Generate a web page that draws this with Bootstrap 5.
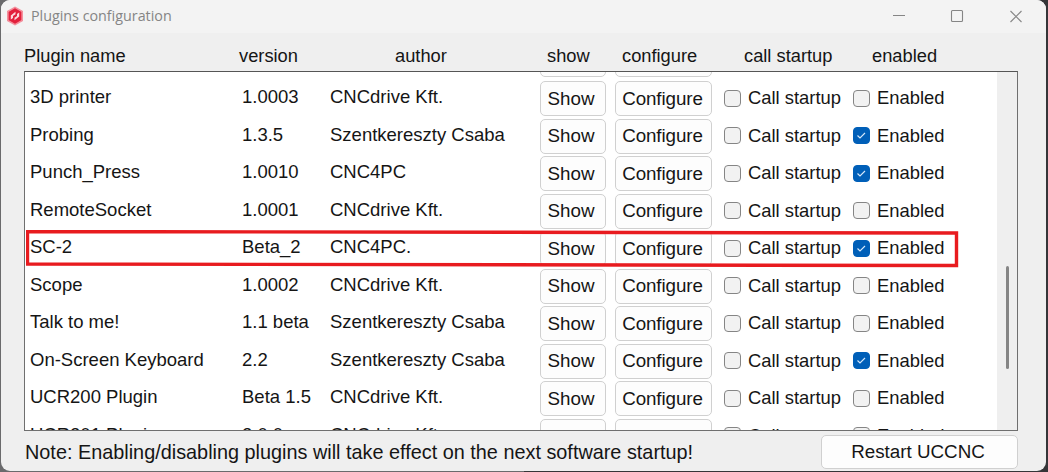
<!DOCTYPE html>
<html lang="en">
<head>
<meta charset="utf-8">
<title>Plugins configuration</title>
<link href="https://cdn.jsdelivr.net/npm/bootstrap@5.3.0/dist/css/bootstrap.min.css" rel="stylesheet">
<style>
body{width:1048px;height:472px;overflow:hidden;background:linear-gradient(90deg,#6a6a6c 0,#6a6a6c 50%,#353538 50%);font-family:"Liberation Sans",Arial,sans-serif;font-size:18.5px;line-height:24px;color:#151515;white-space:nowrap}
.win{width:1045px;height:471px;margin-left:1px;background:#efefef;border-radius:9px;overflow:hidden}
.titlebar{height:33px;background:#f3f3f3;padding:0 0 2px 5px;font:14.3px/31px "Open Sans","Noto Sans",sans-serif;color:#858585}
.titlebar .name{margin-left:7px;width:862px}
.heads{display:grid;grid-template-columns:215px 156px 152px 75px 122px 128px auto;height:38px;padding:11px 0 0 23px;font-size:18.3px}
.plist{position:relative;width:994px;height:360px;margin-left:23px;background:#fff;border:1px solid #6f6f6f;border-top-color:#555;overflow:hidden}
.rows{padding-top:9px}
.prow{display:grid;grid-template-columns:212px 88px 210px 75px 109px 129px auto;height:37.5px;padding-left:5px}
.prow>span{padding-top:4px}
.peek{height:5px;margin-top:-9px;margin-bottom:4px;overflow:hidden}
.peek i{display:block;height:35px;margin-top:-30px;grid-row:1}
.peek .b1{grid-column:4}
.peek .b2{grid-column:5}
.wbtn{height:35px;padding:1px 0 1px;border:1.5px solid #d0d0d0;border-radius:5px;background:#fdfdfd;color:#151515;font-size:18.8px;line-height:30px;text-align:center}
.b1{width:66px;padding-right:4px}.b2{width:97px;padding-right:2px;letter-spacing:-.1px}
.chk{display:flex;align-items:center;height:24px;margin-top:5px;gap:7px;font-size:18.4px}
.box{flex:none;width:17px;height:17px;border:1.4px solid #858585;border-radius:4px;background:#f2f2f2;display:flex}
.box.on{background:#005fb8;border-color:#005fb8}
.track{position:absolute;right:0;top:0;width:20px;height:358px;background:#efefef}
.thumb{position:absolute;right:8px;top:194px;width:3px;height:103px;border-radius:2px;background:#858585}
.mark-row{position:absolute;left:26px;top:230px}
.foot{height:40px;padding-left:24px}
.note{font-size:19.85px;width:796px;padding-top:9px}
.restart{width:197px;height:34px;margin-top:4px;font-size:18.8px;line-height:29px;padding:0 3px 2px 0}
</style>
<script src="https://cdn.jsdelivr.net/npm/bootstrap@5.3.0/dist/js/bootstrap.bundle.min.js"></script>
</head>
<body>
<div class="win">
  <div class="titlebar d-flex align-items-center">
    <svg width="18" height="20" viewBox="0 0 18 20"><path d="M9 .5 17 5v10l-8 4.500L1 15V5z" fill="#f48a98"/><path d="M9 1.800 15.800 5.700v8.600L9 18.200 2.200 14.300V5.700z" fill="#e3203c" stroke="#f9b3bb" stroke-width=".6"/><path d="M4.800 13.500V9.500L9.500 5.800v2.400L7 10v2zM13.200 6.500v4L8.500 14.200v-2.400L11 10V8z" fill="#fbd9dd"/></svg>
    <span class="name">Plugins configuration</span>
    <svg width="132" height="14" viewBox="0 0 132 14" fill="none" stroke="#858585" stroke-width="1.100"><path d="M0 6.500h12M117.500 2l11 11m0-11-11 11"/><rect x="58.500" y="1.500" width="11" height="11" rx="1"/></svg>
  </div>
  <div class="heads"><span>Plugin name</span><span>version</span><span>author</span><span>show</span><span>configure</span><span>call startup</span><span>enabled</span></div>
  <div class="plist">
    <div class="rows">
      <div class="prow peek"><i class="wbtn b1"></i><i class="wbtn b2"></i></div>
      <div id="rows"></div>
    </div>
    <div class="track"><div class="thumb"></div></div>
  </div>
  <div class="foot d-flex">
    <div class="note">Note: Enabling/disabling plugins will take effect on the next software startup!</div>
    <button class="wbtn restart">Restart UCCNC</button>
  </div>
</div>
<svg class="mark-row" width="933" height="38" viewBox="0 0 933 38"><path d="M1.500 1.500 930.500 3v32.500L1.500 34z" fill="none" stroke="#e81b1f" stroke-width="3.400"/></svg>
<script>
const plugins = [
  ["3D printer", "1.0003", "CNCdrive Kft.", 0],
  ["Probing", "1.3.5", "Szentkereszty Csaba", 1],
  ["Punch_Press", "1.0010", "CNC4PC", 1],
  ["RemoteSocket", "1.0001", "CNCdrive Kft.", 0],
  ["SC-2", "Beta_2", "CNC4PC.", 1],
  ["Scope", "1.0002", "CNCdrive Kft.", 0],
  ["Talk to me!", "1.1 beta", "Szentkereszty Csaba", 0],
  ["On-Screen Keyboard", "2.2", "Szentkereszty Csaba", 1],
  ["UCR200 Plugin", "Beta 1.5", "CNCdrive Kft.", 0],
  ["UCR201 Plugin", "2.0.0", "CNCdrive Kft.", 0]
];
const tick = '<svg width="15" height="15" viewBox="0 0 15 15"><path d="M3.500 7.500 6 10l5-5" fill="none" stroke="#d5e8fa" stroke-width="1.200"/></svg>';
const check = (on, label) => `<div class="chk"><i class="box ${on ? "on" : ""}">${on ? tick : ""}</i>${label}</div>`;
document.getElementById("rows").innerHTML = plugins.map(([n, v, a, on], i) =>
  i < plugins.length - 1
    ? `<div class="prow"><span>${n}</span><span>${v}</span><span>${a}</span><button class="wbtn b1">Show</button><button class="wbtn b2">Configure</button>${check(0, "Call startup")}${check(on, "Enabled")}</div>`
    : `<div class="prow"><span>${n}</span><span>${v}</span><span>${a}</span><i class="wbtn b1"></i><i class="wbtn b2"></i>${check(0, "Call startup")}${check(on, "Enabled")}</div>`).join("");
</script>
</body>
</html>
